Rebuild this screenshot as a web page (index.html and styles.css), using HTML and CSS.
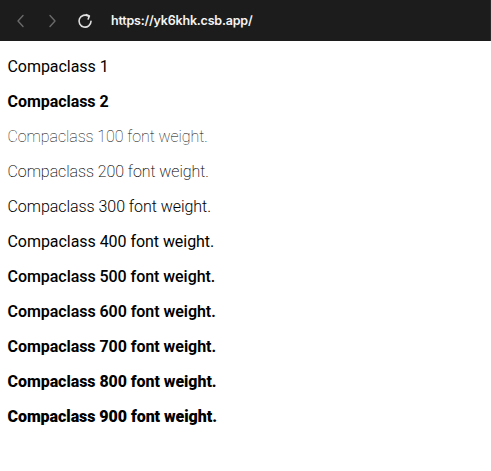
FILE: index.html
```html
<!DOCTYPE html>
<html>
<head>
<meta charset="utf-8">
<link rel="stylesheet" href="styles.css">
</head>
<body>
<div class="bar">
  <svg class="ic nav" width="12" height="14" viewBox="0 0 12 14"><path d="M8 1.5 L3 7 L8 12.5" fill="none" stroke="currentColor" stroke-width="1.4" stroke-linecap="round" stroke-linejoin="round"/></svg>
  <svg class="ic nav" width="12" height="14" viewBox="0 0 12 14"><path d="M4 1.5 L9 7 L4 12.5" fill="none" stroke="currentColor" stroke-width="1.4" stroke-linecap="round" stroke-linejoin="round"/></svg>
  <svg class="ic reload" width="16" height="16" viewBox="0 0 16 16"><path d="M14 8.2 A6 6 0 1 1 11.4 3.2" fill="none" stroke="currentColor" stroke-width="1.6" stroke-linecap="round"/><path d="M9.4 1.6 L12.4 3 L11.2 6" fill="none" stroke="currentColor" stroke-width="1.6" stroke-linecap="round" stroke-linejoin="round"/></svg>
  <span class="url">https://yk6khk.csb.app/</span>
</div>
<main class="page">
  <p class="w400">Compaclass 1</p>
  <p class="w700">Compaclass 2</p>
  <p class="w100">Compaclass 100 font weight.</p>
  <p class="w200">Compaclass 200 font weight.</p>
  <p class="w300">Compaclass 300 font weight.</p>
  <p class="w400">Compaclass 400 font weight.</p>
  <p class="w500">Compaclass 500 font weight.</p>
  <p class="w600">Compaclass 600 font weight.</p>
  <p class="w700">Compaclass 700 font weight.</p>
  <p class="w800">Compaclass 800 font weight.</p>
  <p class="w900">Compaclass 900 font weight.</p>
</main>
</body>
</html>
```
FILE: styles.css
```css
html, body {
  margin: 0;
  background: #fff;
}
.bar {
  height: 41px;
  background: #1c1c1c;
  display: flex;
  align-items: center;
  padding-left: 15px;
  box-sizing: border-box;
  border-right: 1px solid #2a2a2a;
}
.ic { display: block; flex: none; }
.nav { color: #6a6a6a; margin-right: 19px; }
.nav + .nav { margin-right: 19px; }
.reload { color: #e0e0e0; margin-right: 18px; }
.url {
  color: #f4f4f4;
  font-family: Inter, "Noto Sans", sans-serif;
  font-weight: 600;
  font-size: 12.5px;
  letter-spacing: -0.2px;
}
.page {
  padding: 0 7.5px;
  font-family: Roboto, "Noto Sans", sans-serif;
  font-size: 16px;
  letter-spacing: -0.05px;
  color: #000;
}
.page p { margin: 16px 0; }
.w100 { font-weight: 100; }
.w200 { font-weight: 200; }
.w300 { font-weight: 300; }
.w400 { font-weight: 400; }
.w500 { font-weight: 500; }
.w600 { font-weight: 600; }
.w700 { font-weight: 700; }
.w800 { font-weight: 800; }
.w900 { font-weight: 900; }
```
